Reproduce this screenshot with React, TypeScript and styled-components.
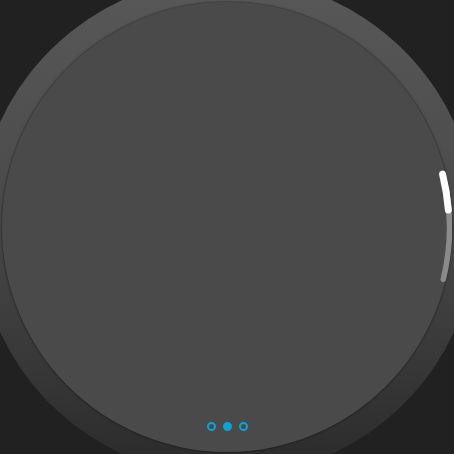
import React from "react";
import styled, { createGlobalStyle } from "styled-components";

const Global = createGlobalStyle`
  html, body { margin: 0; padding: 0; background: #212121; }
  body { font-family: "Roboto", "Liberation Sans", sans-serif; }
`;

const Stage = styled.div`
  width: 454px;
  height: 454px;
  overflow: hidden;
  display: flex;
  align-items: center;
  justify-content: center;
  background: #212121;
`;

const Bezel = styled.div`
  flex-shrink: 0;
  width: 500px;
  height: 500px;
  border-radius: 50%;
  background: linear-gradient(180deg, #585858 0%, #4e4e4e 35%, #3f3f3f 65%, #2a2a2a 100%);
  display: flex;
  align-items: center;
  justify-content: center;
`;

const Screen = styled.div`
  position: relative;
  width: 450px;
  height: 450px;
  border-radius: 50%;
  background: #4a4a4a;
  box-shadow: 0 0 0 1px rgba(0, 0, 0, 0.1), 0 0 3px rgba(0, 0, 0, 0.35);
  display: flex;
  flex-direction: column;
  align-items: center;
  justify-content: flex-end;
  padding-bottom: 21px;
  box-sizing: border-box;
`;

const Dots = styled.div`
  display: flex;
  gap: 7px;
  align-items: center;
`;

const Dot = styled.span<{ $active?: boolean }>`
  width: 9px;
  height: 9px;
  box-sizing: border-box;
  border-radius: 50%;
  border: 2px solid #10a2d4;
  background: ${(p) => (p.$active ? "#10a2d4" : "transparent")};
`;

const ScrollOverlay = styled.svg`
  position: absolute;
  inset: 0;
  pointer-events: none;
`;

function arcPath(cx: number, cy: number, r: number, a0: number, a1: number) {
  const rad = (d: number) => (d * Math.PI) / 180;
  const x0 = cx + r * Math.cos(rad(a0));
  const y0 = cy + r * Math.sin(rad(a0));
  const x1 = cx + r * Math.cos(rad(a1));
  const y1 = cy + r * Math.sin(rad(a1));
  return `M ${x0} ${y0} A ${r} ${r} 0 0 1 ${x1} ${y1}`;
}

export default function App() {
  return (
    <>
      <Global />
      <Stage>
        <Bezel>
          <Screen>
            <ScrollOverlay width="450" height="450" viewBox="0 0 450 450">
              <path
                d={arcPath(225, 225, 222.5, -10, 13.6)}
                stroke="#8a8a8a"
                strokeWidth="5.5"
                strokeLinecap="round"
                fill="none"
              />
              <path
                d={arcPath(225, 225, 222, -13.8, -4.4)}
                stroke="#ffffff"
                strokeWidth="7"
                strokeLinecap="round"
                fill="none"
              />
            </ScrollOverlay>
            <Dots>
              <Dot />
              <Dot $active />
              <Dot />
            </Dots>
          </Screen>
        </Bezel>
      </Stage>
    </>
  );
}
